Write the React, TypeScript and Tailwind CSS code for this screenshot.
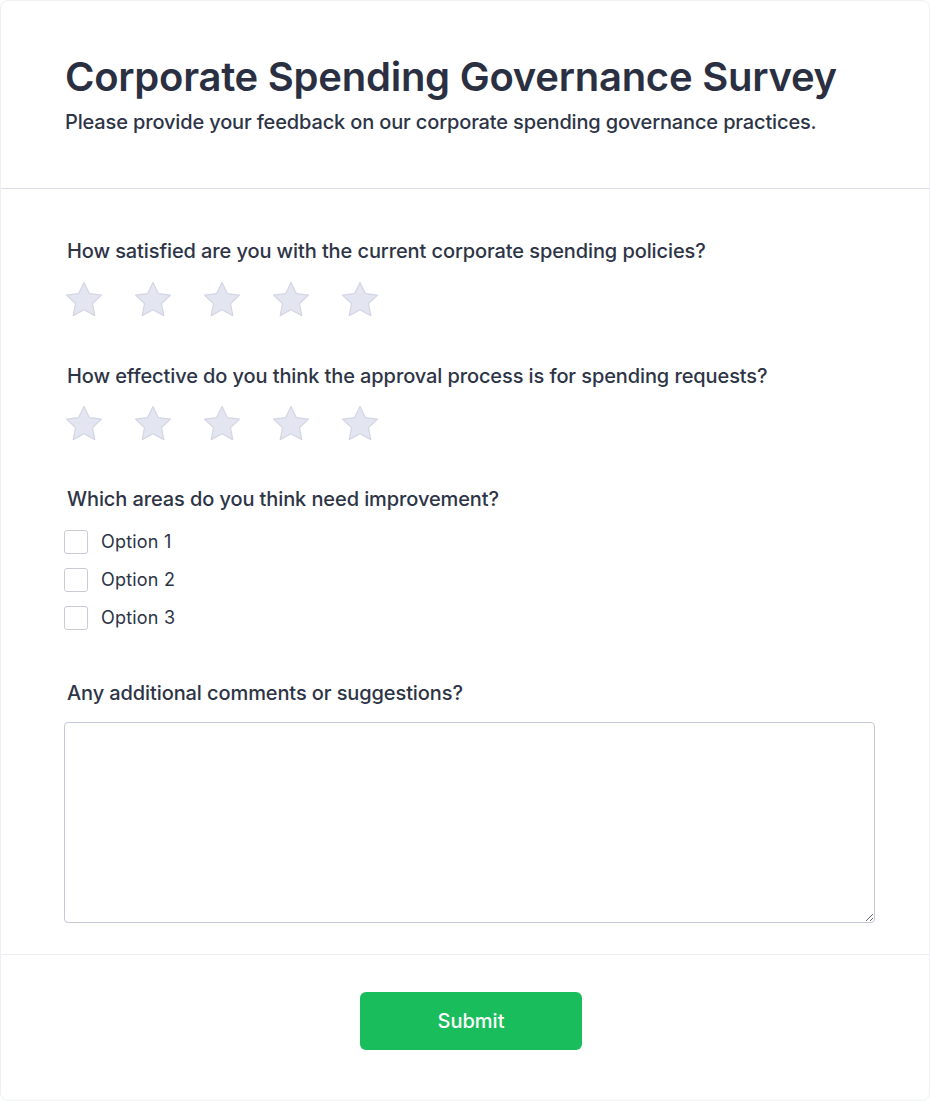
import React from "react";

function Star() {
  return (
    <svg width="40" height="40" viewBox="0 0 40 40" aria-hidden="true">
      <polygon
        points="20,2.5 25.3,13.6 37.5,15.1 28.5,23.5 30.8,35.6 20,29.7 9.2,35.6 11.5,23.5 2.5,15.1 14.7,13.6"
        fill="#e3e5f0"
        stroke="#d3d6e4"
        strokeWidth="1.2"
        strokeLinejoin="round"
      />
    </svg>
  );
}

function Stars() {
  return (
    <div className="flex gap-[29px]">
      {[0, 1, 2, 3, 4].map((i) => (
        <button key={i} type="button" className="block">
          <Star />
        </button>
      ))}
    </div>
  );
}

export default function App() {
  return (
    <div
      className="w-[930px] bg-white text-[#2d3446]"
      style={{ fontFamily: "Inter, 'Noto Sans', sans-serif" }}
    >
      <div className="rounded-lg border border-[#eef0f4] bg-white">
        <header className="pl-16 pr-12 pt-[52px] pb-[52px] border-b border-[#dcdcea]">
          <h1 className="text-[40px] leading-[48px] font-semibold text-[#2a3042] tracking-[-0.25px]">
            Corporate Spending Governance Survey
          </h1>
          <p className="mt-[7px] text-[20px] leading-7 font-medium tracking-[-0.15px] text-[#2d3446]">
            Please provide your feedback on our corporate spending governance practices.
          </p>
        </header>

        <main className="pl-[63px] pr-[54px] pt-12 pb-[31px] border-b border-[#ececf2]">
          <div>
            <p className="pl-[3px] text-[20px] leading-7 font-medium tracking-[-0.1px]">
              How satisfied are you with the current corporate spending policies?
            </p>
            <div className="mt-[15px]">
              <Stars />
            </div>
          </div>

          <div className="mt-[42px]">
            <p className="pl-[3px] text-[20px] leading-7 font-medium tracking-[-0.1px]">
              How effective do you think the approval process is for spending requests?
            </p>
            <div className="mt-[14px]">
              <Stars />
            </div>
          </div>

          <div className="mt-[41px]">
            <p className="pl-[3px] text-[20px] leading-7 font-medium tracking-[-0.1px]">
              Which areas do you think need improvement?
            </p>
            <div className="mt-[15px] flex flex-col gap-[10px]">
              {["Option 1", "Option 2", "Option 3"].map((o) => (
                <label key={o} className="flex items-center gap-[13px] h-7">
                  <span className="w-6 h-6 rounded-[3px] border border-[#c9ccd8] bg-white" />
                  <span className="text-lg leading-7 text-[#2d3446] tracking-[0.2px]">{o}</span>
                </label>
              ))}
            </div>
          </div>

          <div className="mt-[47px]">
            <p className="pl-[3px] text-[20px] leading-7 font-medium tracking-[-0.1px]">
              Any additional comments or suggestions?
            </p>
            <textarea className="mt-[15px] block w-full h-[201px] rounded-[4px] border border-[#c5c8d6] bg-white outline-none" />
          </div>
        </main>

        <footer className="flex justify-center pl-[12px] pt-[37px] pb-[50px]">
          <button
            type="button"
            className="w-[222px] h-[58px] rounded-md bg-[#1abd5c] text-white text-[20px] font-medium"
          >
            Submit
          </button>
        </footer>
      </div>
    </div>
  );
}
